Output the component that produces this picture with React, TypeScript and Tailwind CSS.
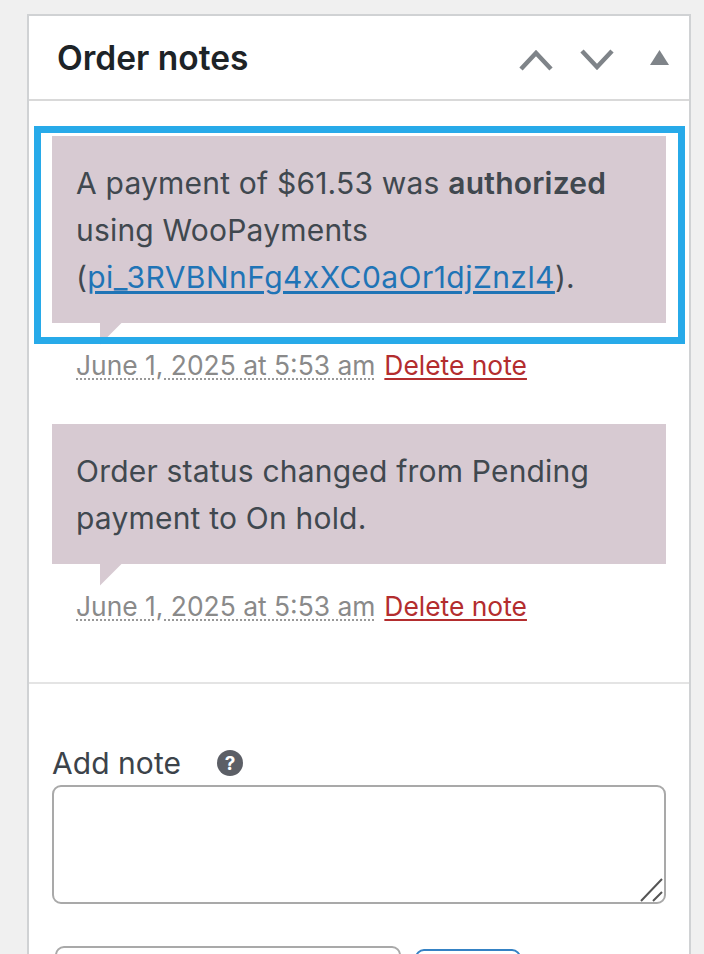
const font = "font-['Inter','Liberation_Sans',sans-serif]";

type NoteProps = {
  children: React.ReactNode;
  meta: string;
  highlighted?: boolean;
};

const Note = ({ children, meta, highlighted }: NoteProps) => {
  return (
    <li className="relative">
      {highlighted && (
        <div className="absolute left-[-18px] right-[-19px] top-[-10px] h-[218px] border-[7px] border-[#27aae9] pointer-events-none z-10" />
      )}
      <div className="relative bg-[#d7cad2] px-[24px] pt-[24px] pb-[21.5px] text-[30px] tracking-[0.2px] leading-[47px] text-[#40484f]">
        {children}
        <div className="absolute left-[48px] top-full w-[22px] h-[22px] bg-[#d7cad2] [clip-path:polygon(0_0,100%_0,0_100%)]" />
      </div>
      <p className="pl-[24px] mt-[26px] h-[32px] text-[26.4px] leading-[32px] whitespace-nowrap">
        <abbr className="text-[#8a8a8a] underline decoration-dotted decoration-2 decoration-[#999] underline-offset-[4px]">
          {meta}
        </abbr>
        <a href="#" className="ml-[9px] text-[#b32d2e] underline underline-offset-[3px]">
          Delete note
        </a>
      </p>
    </li>
  );
};

const App = () => {
  return (
    <div className={`${font} h-[954px] overflow-hidden bg-[#f0f0f0] pt-[14px] pl-[27px]`}>
      <div className="w-[664px] h-[1000px] bg-white border-x-2 border-t-2 border-[#d0d2d4]">
        <div className="h-[85px] flex items-center justify-between pl-[28px] pr-[20px] border-b-2 border-[#d9d9d9]">
          <h2 className="mt-[2px] text-[33.5px] font-semibold text-[#1d2327]">Order notes</h2>
          <div className="flex items-center">
            <svg width="34" height="22" viewBox="0 0 34 22" fill="none" stroke="#7f8489" strokeWidth="4.5" className="mr-[27px] mt-[4px]">
              <path d="M2 20 L17 4 L32 20" />
            </svg>
            <svg width="34" height="22" viewBox="0 0 34 22" fill="none" stroke="#7f8489" strokeWidth="4.5" className="mr-[36px] mt-[4px]">
              <path d="M2 2 L17 18 L32 2" />
            </svg>
            <svg width="19" height="16" viewBox="0 0 19 16" fill="#7f8489">
              <path d="M9.5 0 L19 15 L0 15 Z" />
            </svg>
          </div>
        </div>

        <ul className="px-[23px] pt-[35px] flex flex-col gap-[43.5px]">
          <Note meta="June 1, 2025 at 5:53 am" highlighted>
            A payment of $61.53 was <strong className="font-semibold">authorized</strong> using WooPayments (
            <a href="#" className="text-[#1f74b6] tracking-[0.45px] underline underline-offset-[3px]">
              pi_3RVBNnFg4xXC0aOr1djZnzl4
            </a>
            ).
          </Note>
          <Note meta="June 1, 2025 at 5:53 am">
            Order status changed from Pending payment to On hold.
          </Note>
        </ul>

        <div className="mt-[60px] border-t-2 border-[#e4e4e4] px-[23px] pt-[57.5px]">
          <div className="flex items-center h-[44px]">
            <label className="text-[30px] tracking-[0.05px] text-[#3c434a]">Add note</label>
            <svg width="26" height="26" viewBox="0 0 26 26" className="ml-[36px]">
              <circle cx="13" cy="13" r="13" fill="#5c5f66" />
              <text x="13" y="20" textAnchor="middle" fontSize="19" fontWeight="700" fill="#fff">
                ?
              </text>
            </svg>
          </div>
          <div className="relative h-[119px] rounded-[9px] border-2 border-[#a9a9a9] bg-white">
            <svg width="26" height="26" viewBox="0 0 26 26" fill="none" stroke="#555" strokeWidth="2" className="absolute right-0 bottom-0">
              <path d="M3 25 L24 3 M15 25 L24 16" />
            </svg>
          </div>
          <div className="flex items-start mt-[42px] ml-[3px]">
            <div className="w-[346px] h-[60px] rounded-[9px] border-2 border-[#a9a9a9]" />
            <div className="ml-[14px] mt-[3px] w-[106px] h-[60px] rounded-[9px] border-2 border-[#3582c4]" />
          </div>
        </div>
      </div>
    </div>
  );
};

export default App;
